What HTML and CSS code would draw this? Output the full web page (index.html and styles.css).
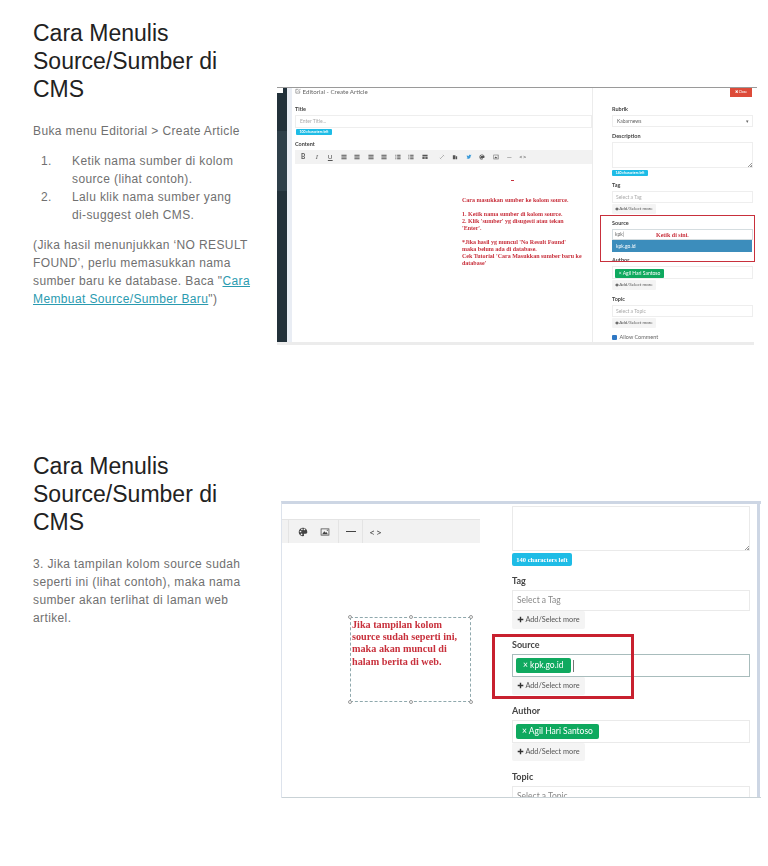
FILE: index.html
```html
<!DOCTYPE html>
<html lang="id">
<head>
<meta charset="utf-8">
<title>Cara Menulis Source/Sumber di CMS</title>
<link rel="stylesheet" href="styles.css">
</head>
<body>
<svg class="defs" width="0" height="0" aria-hidden="true">
  <symbol id="i-align" viewBox="0 0 14 14"><path d="M1 2h12v2H1zM1 6h12v2H1zM1 10h12v2H1z" fill="currentColor"/></symbol>
  <symbol id="i-list" viewBox="0 0 14 14"><path d="M1 2h2v2H1zM5 2h8v2H5zM1 6h2v2H1zM5 6h8v2H5zM1 10h2v2H1zM5 10h8v2H5z" fill="currentColor"/></symbol>
  <symbol id="i-table" viewBox="0 0 14 14"><path d="M1 2h12v3H1zM1 6.500h3.500v5H1zM5.500 6.500h3v5h-3zM9.500 6.500H13v5H9.500z" fill="currentColor"/></symbol>
  <symbol id="i-link" viewBox="0 0 14 14"><path d="M3 11l8-8M2 9l3 3M9 2l3 3" fill="none" stroke="currentColor" stroke-width="2"/></symbol>
  <symbol id="i-pic" viewBox="0 0 14 14"><path d="M2 3h6v9H2zM9 5h3v7H9z" fill="currentColor"/></symbol>
  <symbol id="i-bird" viewBox="0 0 14 14"><path d="M1 10c4 3 10 1 10-6l2-2-2.500.500C9 1 6 2 6.500 5 4.500 5 3 4 2 3c-.500 2 0 3 1 4l-1 0c.300 1 1 2 2.500 2.300C3.500 10 2 10 1 10z" fill="currentColor"/></symbol>
  <symbol id="i-palette" viewBox="0 0 14 14"><path fill-rule="evenodd" d="M7 1a6 6 0 1 0 0 12c1.600 0 1.800-1 1.300-2-.4-1 .2-1.700 1.300-1.700H11c1.300 0 2-1 2-2.300C13 3.500 10.500 1 7 1zM3.500 7.500a1.200 1.200 0 1 1 0-2.400 1.200 1.200 0 0 1 0 2.400zM5.500 4.500a1.200 1.200 0 1 1 0-2.400 1.200 1.200 0 0 1 0 2.400zM9 4.500a1.200 1.200 0 1 1 0-2.400 1.200 1.200 0 0 1 0 2.400zM5 11.500a1.200 1.200 0 1 1 0-2.400 1.200 1.200 0 0 1 0 2.400z" fill="currentColor"/></symbol>
  <symbol id="i-image" viewBox="0 0 14 14"><path fill-rule="evenodd" d="M1 2h12v10H1zM2 3v8h10V3z" fill="currentColor"/><path d="M3 10l3-4 2 2 1-1 2 3zM9.500 3.800h1.500v1.500H9.500z" fill="currentColor"/></symbol>
  <symbol id="i-edit" viewBox="0 0 14 14"><path d="M11 7v5H2V3h6M6 9l7-7" fill="none" stroke="currentColor" stroke-width="1.300"/></symbol>
  <symbol id="i-plus" viewBox="0 0 10 10"><path d="M4 1h2v3h3v2H6v3H4V6H1V4h3z" fill="currentColor"/></symbol>
</svg>

<section class="slide">
  <div class="copy">
    <h1>Cara Menulis Source/Sumber di CMS</h1>
    <p class="lead">Buka menu Editorial &gt; Create Article</p>
    <ol class="steps">
      <li><span>Ketik nama sumber di kolom source (lihat contoh).</span></li>
      <li><span>Lalu klik nama sumber yang <span class="nb">di-suggest</span> oleh CMS.</span></li>
    </ol>
    <p>(Jika hasil menunjukkan ‘NO RESULT FOUND’, perlu memasukkan nama sumber baru ke database. Baca "<a href="#">Cara Membuat Source/Sumber Baru</a>")</p>
  </div>

  <div class="shot shot-a">
    <div class="rail"><span class="rail-top"></span><span class="rail-mid"></span></div>
    <div class="strip"></div>
    <div class="a-main">
      <div class="a-head"><svg class="ic"><use href="#i-edit"/></svg> Editorial - Create Article</div>
      <div class="a-label a-title-label">Title</div>
      <div class="a-input ph a-title">Enter Title...</div>
      <div class="a-badge">100 characters left</div>
      <div class="a-label a-content-label">Content</div>
      <div class="a-toolbar">
        <span class="tb b">B</span><span class="tb i">I</span><span class="tb u">U</span>
        <span class="tb"><svg class="ic"><use href="#i-align"/></svg></span>
        <span class="tb"><svg class="ic"><use href="#i-align"/></svg></span>
        <span class="tb"><svg class="ic"><use href="#i-align"/></svg></span>
        <span class="tb"><svg class="ic"><use href="#i-align"/></svg></span>
        <span class="tb"><svg class="ic"><use href="#i-list"/></svg></span>
        <span class="tb"><svg class="ic"><use href="#i-list"/></svg></span>
        <span class="tb tb-w"><svg class="ic"><use href="#i-table"/></svg></span>
        <span class="tb"><svg class="ic light"><use href="#i-link"/></svg></span>
        <span class="tb"><svg class="ic"><use href="#i-pic"/></svg></span>
        <span class="tb tw"><svg class="ic"><use href="#i-bird"/></svg></span>
        <span class="tb"><svg class="ic"><use href="#i-palette"/></svg></span>
        <span class="tb"><svg class="ic"><use href="#i-image"/></svg></span>
        <span class="tb">—</span>
        <span class="tb">&lt;&gt;</span>
      </div>
      <div class="a-editor">
        <span class="a-dash"></span>
        <div class="a-note">Cara masukkan sumber ke kolom source.<br><br>1. Ketik nama sumber di kolom source.<br>2. Klik 'sumber' yg disugesti atau tekan<br>'Enter'.<br><br>*Jika hasil yg muncul 'No Result Found'<br>maka belum ada di database.<br>Cek Tutorial 'Cara Masukkan sumber baru ke<br>database'</div>
      </div>
    </div>
    <div class="a-side">
      <div class="a-close">✖ Close</div>
      <div class="a-group a-first">
        <div class="a-label">Rubrik</div>
        <div class="a-input a-select"><span>Kabarnews</span><span>▾</span></div>
      </div>
      <div class="a-group">
        <div class="a-label">Description</div>
        <div class="a-input a-area grip"></div>
        <div class="a-badge a-badge-gap">140 characters left</div>
      </div>
      <div class="a-group">
        <div class="a-label">Tag</div>
        <div class="a-input ph">Select a Tag</div>
        <div class="a-btn"><svg class="ic-plus"><use href="#i-plus"/></svg>Add/Select more</div>
      </div>
      <div class="a-group a-source">
        <div class="a-label">Source</div>
        <div class="a-input a-typed">kpk|</div>
        <div class="a-drop">kpk.go.id</div>
      </div>
      <div class="a-group a-author">
        <div class="a-label">Author</div>
        <div class="a-input a-tags"><span class="a-chip">× Agil Hari Santoso</span></div>
        <div class="a-btn"><svg class="ic-plus"><use href="#i-plus"/></svg>Add/Select more</div>
      </div>
      <div class="a-group">
        <div class="a-label">Topic</div>
        <div class="a-input ph">Select a Topic</div>
        <div class="a-btn"><svg class="ic-plus"><use href="#i-plus"/></svg>Add/Select more</div>
      </div>
      <div class="a-check"><span class="box"></span>Allow Comment</div>
    </div>
    <div class="a-foot"></div>
    <div class="a-mark"></div>
    <div class="a-hint">Ketik di sini.</div>
  </div>
</section>

<section class="slide slide-two">
  <div class="copy">
    <h1>Cara Menulis Source/Sumber di CMS</h1>
    <p class="lead">3. Jika tampilan kolom source sudah seperti ini (lihat contoh), maka nama sumber akan terlihat di laman web artikel.</p>
  </div>

  <div class="shot shot-b">
    <div class="b-main">
      <div class="b-toolbar">
        <span class="b-seg b-seg-start"></span>
        <span class="b-seg b-seg-icons"><svg class="bic"><use href="#i-palette"/></svg><svg class="bic"><use href="#i-image"/></svg></span>
        <span class="b-seg b-seg-rule"><span class="b-rule"></span></span>
        <span class="b-seg b-seg-code">&lt;&gt;</span>
      </div>
      <div class="b-editor"></div>
    </div>
    <div class="b-side">
      <div class="b-input b-area grip"></div>
      <div class="b-badge">140 characters left</div>
      <div class="b-group b-first">
        <div class="b-label">Tag</div>
        <div class="b-input ph">Select a Tag</div>
        <div class="b-btn"><svg class="ic-plus"><use href="#i-plus"/></svg>Add/Select more</div>
      </div>
      <div class="b-group">
        <div class="b-label">Source</div>
        <div class="b-input b-focus"><span class="b-chip">× kpk.go.id</span><span class="b-caret"></span></div>
        <div class="b-btn"><svg class="ic-plus"><use href="#i-plus"/></svg>Add/Select more</div>
      </div>
      <div class="b-group">
        <div class="b-label">Author</div>
        <div class="b-input b-tags"><span class="b-chip">× Agil Hari Santoso</span></div>
        <div class="b-btn"><svg class="ic-plus"><use href="#i-plus"/></svg>Add/Select more</div>
      </div>
      <div class="b-group">
        <div class="b-label">Topic</div>
        <div class="b-input ph">Select a Topic</div>
      </div>
    </div>
    <div class="b-strip"></div>
    <div class="b-foot"></div>
    <div class="b-note">
      <i class="h h1"></i><i class="h h2"></i><i class="h h3"></i><i class="h h4"></i><i class="h h5"></i><i class="h h6"></i>
      Jika tampilan kolom source sudah seperti ini, maka akan muncul di halam berita di web.
    </div>
    <div class="b-mark"></div>
  </div>
</section>
</body>
</html>
```

FILE: styles.css
```css
* { box-sizing: border-box; }
html, body { margin: 0; padding: 0; background: #fff; }
body { font-family: "Liberation Sans", Arial, sans-serif; color: #707070; width: 768px; height: 866px; overflow: hidden; }
.defs { position: absolute; }

.slide { display: flex; height: 433px; padding: 19px 0 0 33px; }
.copy { width: 220px; flex: none; font-size: 12px; line-height: 18px; letter-spacing: .38px; }
.copy h1 { margin: 0 0 19px; font-size: 23px; line-height: 28px; font-weight: 400; letter-spacing: 0; color: #222; width: 200px; }
.copy p { margin: 0; }
.copy .lead { margin-bottom: 12px; }
.copy a { color: #2a9bb0; }
.nb { white-space: nowrap; }
.steps { margin: 0 0 12px; padding: 0 0 0 8px; list-style: none; counter-reset: step; }
.steps li { display: grid; grid-template-columns: 31px 1fr; counter-increment: step; }
.steps li::before { content: counter(step) "."; }

.shot { position: relative; flex: none; width: 480px; overflow: hidden; font-family: Lato, "Open Sans", sans-serif; background: #fff; }
.grip { position: relative; }
.grip::after { content: ""; position: absolute; right: 0; bottom: 0; width: 5px; height: 5px; background: linear-gradient(135deg, transparent 55%, #999 55%, #999 68%, transparent 68%, transparent 78%, #999 78%); }

/* first screenshot */
.shot-a { margin: 68px 0 0 24px; height: 258px; display: flex; border-top: 1px solid #9a9a9a; color: #666; font-size: 5.5px; filter: blur(.5px); }
.rail { width: 10px; background: #22313a; flex: none; display: flex; flex-direction: column; }
.rail-top { height: 5px; width: 6px; background: #fff; }
.rail-mid { height: 60px; margin-top: 38px; background: #2e3f49; }
.strip { width: 5px; background: #e9edf4; flex: none; }
.a-main { width: 301px; flex: none; padding: 0 0 0 3px; border-right: 1px solid #ececec; display: flex; flex-direction: column; }
.a-main > *, .a-side > *, .a-group > *, .b-side > *, .b-group > * { flex: none; }
.a-head { height: 18px; font-size: 6.200px; line-height: 4px; color: #666; }
.a-label { height: 7px; line-height: 7px; font-weight: 700; font-size: 5.500px; color: #444; margin-bottom: 2.500px; }
.a-title-label { margin-bottom: 1.500px; }
.a-input { height: 12px; line-height: 11px; padding: 0 3px; border: 1px solid #eee; background: #fff; color: #666; font-size: 5px; }
.a-input.ph { color: #aaa; }
.a-title { height: 13px; padding-left: 4px; }
.a-badge { width: 36px; height: 6px; margin: 1px 0 0 1px; background: #1ebce6; color: #fff; border-radius: 1px; font-size: 3.500px; line-height: 6px; text-align: center; font-weight: 700; }
.a-badge-gap { margin: 2px 0 0; }
.a-content-label { margin-top: 6px; margin-bottom: 2px; }
.a-toolbar { height: 14px; background: #f2f2f2; display: flex; align-items: center; padding-left: 1.500px; color: #555; }
.tb { width: 13.500px; text-align: center; font-size: 6.500px; line-height: 14px; display: flex; align-items: center; justify-content: center; flex: none; }
.tb.b { font-weight: 700; }
.tb.i { font-style: italic; font-family: "Liberation Serif", serif; }
.tb.u { text-decoration: underline; }
.tb-w { width: 17px; padding-right: 3px; }
.tw { color: #3a9ad9; }
.ic { width: 6px; height: 6px; }
.ic.light { color: #aaa; }
.a-editor { position: relative; flex: 1 !important; }
.a-dash { position: absolute; left: 216px; top: 16px; width: 3px; height: 1.500px; background: #c8303c; }
.a-note { position: absolute; left: 167px; top: 33px; width: 132px; font: 700 6px/7px "Liberation Serif", serif; color: #c8303c; white-space: nowrap; }
.a-side { width: 141px; margin-left: 19px; flex: none; display: flex; flex-direction: column; }
.a-close { width: 22px; height: 10px; align-self: flex-end; margin: -1px 1px 0 0; background: #dd4b39; color: #fff; font-size: 3.500px; line-height: 10px; text-align: center; }
.a-first { margin-top: 8.500px; }
.a-group { margin-bottom: 5.500px; display: flex; flex-direction: column; }
.a-area { height: 26px; }
.a-select { display: flex; justify-content: space-between; padding-left: 4px; }
.a-btn { width: 44px; height: 10px; margin-top: 1px; background: #f4f4f4; border-radius: 1px; font-size: 4.500px; line-height: 10px; text-align: center; color: #555; }
.ic-plus { width: 4px; height: 4px; color: #333; vertical-align: -.5px; }
.a-source { margin-bottom: 4.500px; }
.a-typed { height: 11px; border-color: #d5dde0; line-height: 9px; padding-left: 2px; }
.a-drop { height: 12px; background: #3c8dbc; color: #fff; font-size: 5px; line-height: 12px; padding-left: 4px; width: 140px; }
.a-tags { height: 13px; padding: 1px 2px; }
.a-chip { display: inline-block; width: 49px; height: 9px; background: #0fa95f; color: #fff; border-radius: 1px; font-size: 5px; line-height: 9px; text-align: center; }
.a-check { display: flex; align-items: center; gap: 2.500px; height: 6px; margin-top: .500px; font-size: 5.500px; color: #666; }
.box { width: 5px; height: 5px; background: #2f78c4; border-radius: 1px; }
.a-foot { position: absolute; left: 0; right: 3px; bottom: 0; height: 3px; background: #ececec; }
.a-mark { position: absolute; left: 323px; top: 127px; width: 155px; height: 47px; border: 1.500px solid #c8303c; }
.a-hint { position: absolute; left: 379px; top: 144px; font: 700 6px/7px "Liberation Serif", serif; color: #c8303c; }

/* second screenshot */
.slide-two .copy .lead { margin: 0; }
.shot-b { margin: 49px 0 0 28px; height: 297px; display: flex; border-top: 3px solid #cdd6e4; border-left: 1px solid #dde3ec; color: #555; font-size: 9px; filter: blur(.35px); }
.b-main { width: 198px; flex: none; display: flex; flex-direction: column; }
.b-toolbar { margin-top: 15px; height: 24px; background: #f2f2f2; border-top: 1px solid #e4e4e4; display: flex; align-items: stretch; color: #444; }
.b-seg { display: flex; align-items: center; justify-content: center; border-right: 1px solid #e4e4e4; }
.b-seg-start { width: 7px; }
.b-seg-icons { width: 50px; gap: 12px; }
.b-seg-rule { width: 24px; }
.b-seg-code { width: 26px; border: 0; font-size: 10px; letter-spacing: 1px; }
.bic { width: 10px; height: 10px; }
.b-rule { width: 10px; height: 1.500px; background: #444; }
.b-editor { flex: 1; }
.b-side { width: 238px; margin-left: 32px; flex: none; padding-top: 2px; display: flex; flex-direction: column; }
.b-input { height: 21px; line-height: 19px; padding: 0 4px; border: 1px solid #eaeaea; color: #555; font-size: 8.500px; background: #fff; }
.b-input.ph { color: #888; }
.b-area { height: 45px; }
.b-badge { width: 60px; height: 13px; margin-top: 2px; background: #1ebce6; color: #fff; border-radius: 2px; font: 700 6.500px/13px "Liberation Serif", serif; text-align: center; }
.b-first { margin-top: 7px; }
.b-group { margin-bottom: 8px; display: flex; flex-direction: column; }
.b-label { height: 14px; line-height: 16px; margin-bottom: 3px; font-weight: 700; font-size: 9px; color: #444; }
.b-btn { width: 73px; height: 18px; background: #f4f4f4; border-radius: 2px; font-size: 7.300px; line-height: 18px; text-align: center; color: #555; }
.b-btn .ic-plus { width: 7px; height: 7px; vertical-align: -1px; margin-right: 1px; }
.b-focus { height: 23px; border-color: #a8bcbc; display: flex; align-items: center; padding: 0 3px; }
.b-focus .b-chip { padding: 0 7px; }
.b-tags { height: 23px; display: flex; align-items: center; padding: 0 3px; }
.b-chip { height: 15px; padding: 0 6px; background: #0fa95f; color: #fff; border-radius: 2px; font-size: 8.500px; line-height: 15px; }
.b-caret { width: 1px; height: 12px; margin-left: 2px; background: #777; }
.b-strip { position: absolute; left: 475px; top: 0; bottom: 0; width: 3px; background: #cdd6e4; }
.b-foot { position: absolute; left: 0; right: 0; bottom: 0; height: 1px; background: #c9d2d6; }
.b-note { position: absolute; left: 68px; top: 113px; width: 121px; height: 85px; padding: 1px 0 0 1px; border: 1px dashed #8fa8ad; font: 700 10.200px/12.200px "Liberation Serif", serif; color: #c8303c; }
.h { position: absolute; width: 4px; height: 4px; border: 1px solid #999; border-radius: 50%; background: #fff; }
.h1 { left: -3px; top: -3px; } .h2 { right: -3px; top: -3px; } .h3 { left: -3px; bottom: -3px; } .h4 { right: -3px; bottom: -3px; }
.h5 { left: 58px; top: -3px; } .h6 { left: 58px; bottom: -3px; }
.b-mark { position: absolute; left: 210px; top: 130px; width: 142px; height: 65px; border: 3px solid #c8202f; }
```
